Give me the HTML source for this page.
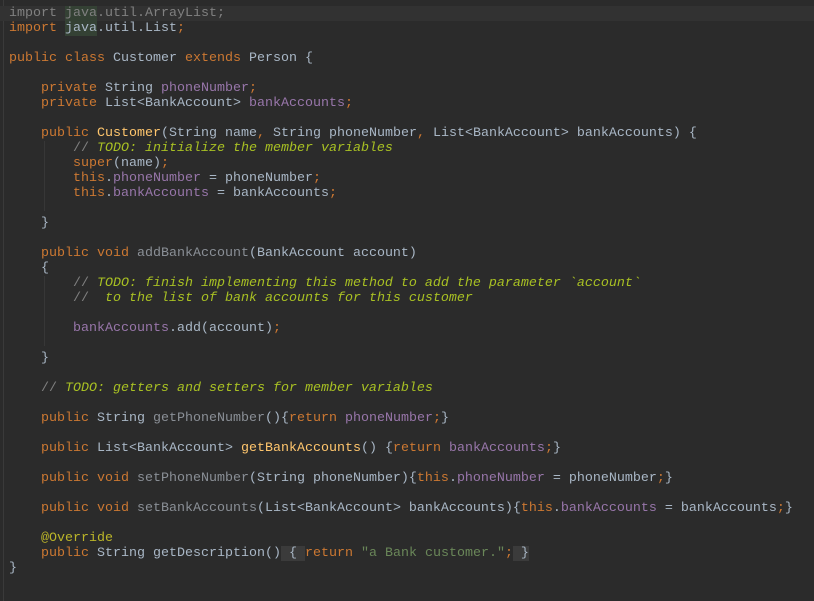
<!DOCTYPE html>
<html><head><meta charset="utf-8"><style>
html,body{margin:0;padding:0;background:#2b2b2b;width:814px;height:601px;overflow:hidden}
.ed{position:absolute;left:0;top:6px;width:814px;font-family:"Liberation Mono","DejaVu Sans Mono",monospace;font-size:13.33px;line-height:15px;color:#a9b7c6}
.l{height:15px;padding-left:9px;white-space:pre}
.cur{background:#323232}
.k{color:#cc7832}.f{color:#9876aa}.m{color:#ffc66d}.c{color:#808080}.t{color:#a8c023;font-style:italic}
.s{color:#6a8759}.a{color:#bbb529}.g{color:#808080}.u{color:#8a8f96}
.h{background:#344134}.b{background:#3b3b3b}
.gut{position:absolute;left:3px;top:0;width:1px;height:601px;background:#3a3a3a}
.ind{position:absolute;width:1px;background:#373737}
</style></head><body>
<div class="gut"></div>
<div class="ind" style="left:44px;top:141px;height:70px"></div>
<div class="ind" style="left:44px;top:276px;height:70px"></div>
<div class="ed"><div class="l cur"><span class="g">import <span class="h">java</span>.util.ArrayList;</span></div><div class="l"><span class="k">import </span><span class="h">java</span>.util.List<span class="k">;</span></div><div class="l"></div><div class="l"><span class="k">public class </span>Customer <span class="k">extends </span>Person {</div><div class="l"></div><div class="l">    <span class="k">private </span>String <span class="f">phoneNumber</span><span class="k">;</span></div><div class="l">    <span class="k">private </span>List&lt;BankAccount&gt; <span class="f">bankAccounts</span><span class="k">;</span></div><div class="l"></div><div class="l">    <span class="k">public </span><span class="m">Customer</span>(String name<span class="k">, </span>String phoneNumber<span class="k">, </span>List&lt;BankAccount&gt; bankAccounts) {</div><div class="l">        <span class="c">// </span><span class="t">TODO: initialize the member variables</span></div><div class="l">        <span class="k">super</span>(name)<span class="k">;</span></div><div class="l">        <span class="k">this</span>.<span class="f">phoneNumber </span>= phoneNumber<span class="k">;</span></div><div class="l">        <span class="k">this</span>.<span class="f">bankAccounts </span>= bankAccounts<span class="k">;</span></div><div class="l"></div><div class="l">    }</div><div class="l"></div><div class="l">    <span class="k">public void </span><span class="u">addBankAccount</span>(BankAccount account)</div><div class="l">    {</div><div class="l">        <span class="c">// </span><span class="t">TODO: finish implementing this method to add the parameter `account`</span></div><div class="l">        <span class="c">//  </span><span class="t">to the list of bank accounts for this customer</span></div><div class="l"></div><div class="l">        <span class="f">bankAccounts</span>.add(account)<span class="k">;</span></div><div class="l"></div><div class="l">    }</div><div class="l"></div><div class="l">    <span class="c">// </span><span class="t">TODO: getters and setters for member variables</span></div><div class="l"></div><div class="l">    <span class="k">public </span>String <span class="u">getPhoneNumber</span>(){<span class="k">return </span><span class="f">phoneNumber</span><span class="k">;</span>}</div><div class="l"></div><div class="l">    <span class="k">public </span>List&lt;BankAccount&gt; <span class="m">getBankAccounts</span>() {<span class="k">return </span><span class="f">bankAccounts</span><span class="k">;</span>}</div><div class="l"></div><div class="l">    <span class="k">public void </span><span class="u">setPhoneNumber</span>(String phoneNumber){<span class="k">this</span>.<span class="f">phoneNumber </span>= phoneNumber<span class="k">;</span>}</div><div class="l"></div><div class="l">    <span class="k">public void </span><span class="u">setBankAccounts</span>(List&lt;BankAccount&gt; bankAccounts){<span class="k">this</span>.<span class="f">bankAccounts </span>= bankAccounts<span class="k">;</span>}</div><div class="l"></div><div class="l">    <span class="a">@Override</span></div><div class="l">    <span class="k">public </span>String getDescription()<span class="b"> { </span><span class="k">return </span><span class="s">"a Bank customer."</span><span class="k">;</span><span class="b"> }</span></div><div class="l">}</div></div>
</body></html>
